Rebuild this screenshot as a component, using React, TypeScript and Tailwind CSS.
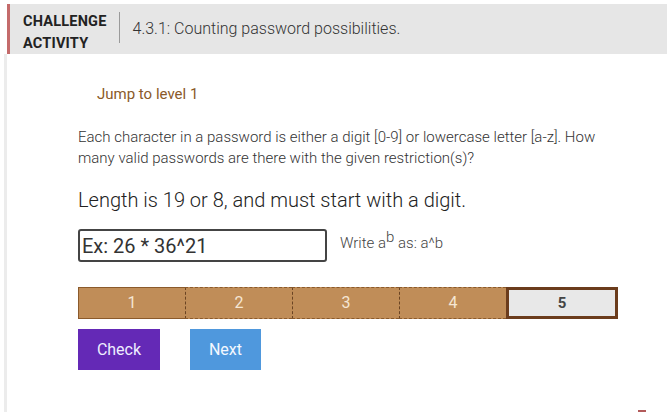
const levels = [1, 2, 3, 4, 5];

const App: React.FC = () => {
  return (
    <div
      className="w-[667px] h-[412px] bg-white overflow-hidden relative"
      style={{ fontFamily: 'Roboto, "Liberation Sans", sans-serif' }}
    >
      <div className="ml-[4px] pt-[4px] flex flex-col h-full">
        {/* header */}
        <div className="ml-[3px] h-[50px] bg-[#e6e6e6] border-l-[3px] border-[#c46b6b] flex items-center">
          <div className="pl-[13px] pr-[12px] pt-[8px] text-[14.5px] leading-[22px] font-bold text-[#222] tracking-[0.2px]">
            <div>CHALLENGE</div>
            <div>ACTIVITY</div>
          </div>
          <div className="w-[1px] h-[31px] bg-[#9a9a9a] -mt-[4px]"></div>
          <div className="pl-[13px] text-[16px] font-light text-[#333]">
            4.3.1: Counting password possibilities.
          </div>
        </div>

        {/* body */}
        <div className="flex-1 border-l-[3px] border-[#ececec] pl-[71px] flex flex-col">
          <div className="pl-[19px] pt-[31px] text-[15px] text-[#8a5a2a] leading-[18px]">
            Jump to level 1
          </div>
          <p className="mt-[24px] w-[540px] text-[15px] font-light leading-[21px] text-[#333]">
            Each character in a password is either a digit [0-9] or lowercase letter [a-z]. How
            many valid passwords are there with the given restriction(s)?
          </p>
          <div className="mt-[19px] text-[20px] font-light text-[#222] leading-[24px]">
            Length is 19 or 8, and must start with a digit.
          </div>

          <div className="mt-[17px] flex items-start">
            <div className="w-[249px] h-[33px] border-2 border-[#444] rounded-[3px] flex items-center pl-[2px] text-[20px] text-[#333]">
              Ex: 26 * 36^21
            </div>
            <div className="ml-[13px] mt-[3px] text-[15px] font-light text-[#444]">
              Write a<span className="relative -top-[6px] text-[15px]">b</span> as: a^b
            </div>
          </div>

          <div className="mt-[25px] w-[540px] h-[32px] flex">
            {levels.map((n) =>
              n === 5 ? (
                <div
                  key={n}
                  className="flex-1 bg-[#e8e8e8] border-[3px] border-[#6b3c1c] flex items-center justify-center text-[15px] font-bold text-[#444]"
                >
                  {n}
                </div>
              ) : (
                <div
                  key={n}
                  className={`flex-1 bg-[#c08d58] border-y border-[#8b5a2b] flex items-center justify-center text-[16px] text-[#f5e6d3] ${
                    n === 1 ? 'border-l' : 'border-l border-dashed border-l-[#6b4423]'
                  }`}
                >
                  {n}
                </div>
              )
            )}
          </div>

          <div className="mt-[10px] flex gap-[30px]">
            <button className="w-[82px] h-[41px] bg-[#6429b6] text-[16px] text-[#eef]">
              Check
            </button>
            <button className="w-[71px] h-[41px] bg-[#4f98dd] text-[16px] text-[#f4f8ff]">
              Next
            </button>
          </div>
        </div>
      </div>
      <div className="absolute left-[638px] bottom-0 w-[8px] h-[2px] bg-[#b25a5a]"></div>
    </div>
  );
};

export default App;
